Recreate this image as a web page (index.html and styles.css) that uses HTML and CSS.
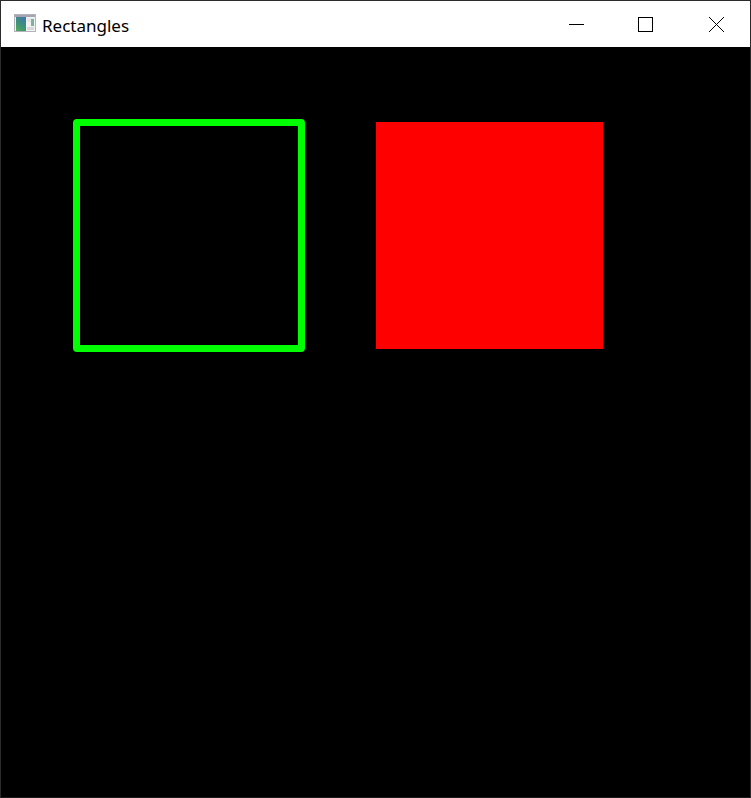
FILE: index.html
```html
<!DOCTYPE html>
<html lang="en">
<head>
    <meta charset="UTF-8">
    <meta name="viewport" content="width=device-width, initial-scale=1.0">
    <title>Rectangles</title>
    <link rel="stylesheet" href="styles.css">
</head>
<body>
    <div class="window">
        <div class="titlebar">
            <svg class="app-icon" width="22" height="18" viewBox="0 0 22 18">
                <defs>
                    <linearGradient id="pic" x1="0.8" y1="0" x2="0.2" y2="1">
                        <stop offset="0" stop-color="#3f78a8"/>
                        <stop offset="0.6" stop-color="#3f9478"/>
                        <stop offset="1" stop-color="#52a85c"/>
                    </linearGradient>
                </defs>
                <rect x="0.5" y="0.5" width="21" height="17" fill="#f2f2f2" stroke="#b4b2bc"/>
                <rect x="1" y="1" width="20" height="2" fill="#a5a4b0"/>
                <rect x="2" y="3" width="10" height="14" fill="url(#pic)"/>
                <rect x="13" y="4" width="7" height="4" fill="#e2e8e5"/>
                <rect x="17" y="5" width="3" height="7" fill="#7fb0a4"/>
                <rect x="13" y="13" width="7" height="3" fill="#d8d8d8"/>
            </svg>
            <span class="title">Rectangles</span>
            <div class="controls">
                <svg class="control" width="70" height="46" viewBox="0 0 70 46">
                    <path d="M29 23.5H44" stroke="#000" fill="none"/>
                </svg>
                <svg class="control" width="70" height="46" viewBox="0 0 70 46">
                    <rect x="28.5" y="16.5" width="14" height="14" stroke="#000" fill="none"/>
                </svg>
                <svg class="control" width="70" height="46" viewBox="0 0 70 46">
                    <path d="M29 16L44 31M44 16L29 31" stroke="#000" fill="none"/>
                </svg>
            </div>
        </div>
        <div class="canvas">
            <div class="outline-rect"></div>
            <div class="filled-rect"></div>
        </div>
    </div>
</body>
</html>
```

FILE: styles.css
```css
html, body {
    margin: 0;
    height: 100%;
    background: #000;
}
.window {
    box-sizing: border-box;
    width: 751px;
    height: 798px;
    display: flex;
    flex-direction: column;
    border: 1px solid #2b2b2b;
    border-bottom-color: #1a1a1a;
}
.titlebar {
    height: 46px;
    display: flex;
    align-items: center;
    padding-left: 13px;
    background: #fff;
    font-family: "Noto Sans", sans-serif;
    font-size: 17px;
    color: #000;
}
.app-icon {
    margin-right: 6px;
    margin-top: -3px;
}
.title {
    margin-top: 2px;
}
.controls {
    display: flex;
    margin-left: auto;
}
.control {
    display: block;
}
.canvas {
    flex: 1;
    display: flex;
    align-items: flex-start;
    gap: 71px;
    padding: 72px 0 0 72px;
    background: #000;
}
.outline-rect {
    box-sizing: border-box;
    width: 232px;
    height: 233px;
    border: 7px solid #00ff00;
    border-radius: 4px;
}
.filled-rect {
    width: 227px;
    height: 227px;
    margin-top: 3px;
    background: #ff0000;
}
```
